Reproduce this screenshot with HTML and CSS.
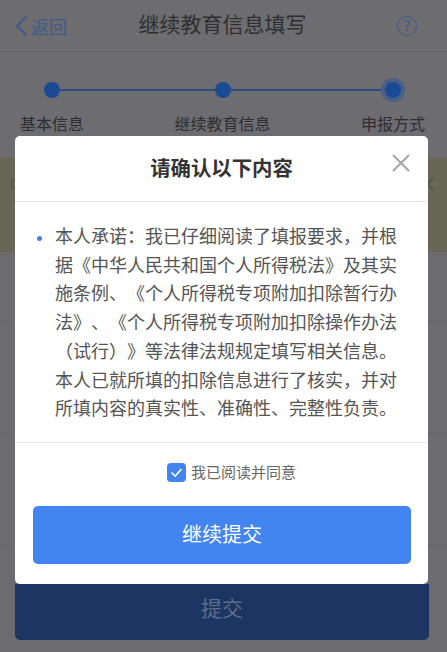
FILE: index.html
```html
<!DOCTYPE html>
<html lang="zh-CN">
  <head>
    <meta charset="UTF-8" />
    <meta name="viewport" content="width=device-width, initial-scale=1.0" />
    <title>继续教育信息填写</title>
    <link rel="stylesheet" href="styles.css">
  </head>
  <body>
    <div class="page">
      <div class="nav">
        <div class="nav-back">
          <svg class="nav-chevron" viewBox="0 0 13 22" width="13" height="22">
            <path d="M11.5 1.5 L2 11 L11.5 20.5" />
          </svg>
          <span>返回</span>
        </div>
        <div class="nav-title">继续教育信息填写</div>
        <div class="nav-help">?</div>
      </div>
      <div class="steps">
        <div class="step-track">
          <span class="step-dot"></span>
          <span class="step-line"></span>
          <span class="step-dot"></span>
          <span class="step-line"></span>
          <span class="step-dot step-dot-current"></span>
        </div>
        <div class="step-labels">
          <span>基本信息</span>
          <span>继续教育信息</span>
          <span>申报方式</span>
        </div>
      </div>
      <div class="notice">
        <span class="notice-icon"></span>
        <svg class="notice-close" viewBox="0 0 14 14" width="14" height="14">
          <path d="M1 1 L13 13 M13 1 L1 13" />
        </svg>
      </div>
      <div class="rows">
        <div class="row row-first"></div>
        <div class="row"></div>
        <div class="row"></div>
      </div>
      <div class="submit">提交</div>
    </div>

    <div class="modal">
      <div class="modal-head">
        <div class="modal-title">请确认以下内容</div>
        <svg class="modal-close" viewBox="0 0 20 20" width="20" height="20">
          <path d="M2 2 L18 18 M18 2 L2 18" />
        </svg>
      </div>
      <div class="modal-body">
        <span class="bullet"></span>
        <p class="promise">本人承诺&#xFF1A;我已仔细阅读了填报要求&#xFF0C;并根据《中华人民共和国个人所得税法》及其实施条例、《个人所得税专项附加扣除暂行办法》、《个人所得税专项附加扣除操作办法&#xFF08;试行&#xFF09;》等法律法规规定填写相关信息。本人已就所填的扣除信息进行了核实&#xFF0C;并对所填内容的真实性、准确性、完整性负责。</p>
      </div>
      <div class="modal-foot">
        <label class="agree">
          <svg class="agree-box" viewBox="0 0 19 19" width="19" height="19">
            <rect width="19" height="19" rx="4" />
            <path d="M4.5 9.5 L8.2 13 L14.5 6" />
          </svg>
          <span>我已阅读并同意</span>
        </label>
        <div class="continue">继续提交</div>
      </div>
    </div>
  </body>
</html>
```

FILE: styles.css
```css
* {
  box-sizing: border-box;
}

body {
  margin: 0;
  padding: 0;
  font-family: "Noto Sans CJK SC", "Liberation Sans", sans-serif;
}

.page {
  display: flex;
  flex-direction: column;
  width: 447px;
  height: 652px;
  overflow: hidden;
  background: #6c6b6f;
}

.nav {
  display: flex;
  justify-content: space-between;
  align-items: center;
  flex: none;
  height: 52px;
  padding: 0 30px 0 15px;
  background: #6d6c6e;
  border-bottom: 1px solid #676668;
  position: relative;
}

.nav-back {
  display: flex;
  align-items: center;
  gap: 3px;
  color: #3f5a8e;
  font-size: 18px;
}

.nav-chevron path {
  fill: none;
  stroke: #3f5a8e;
  stroke-width: 2;
}

.nav-title {
  position: absolute;
  left: 0;
  right: 0;
  top: 8px;
  padding-right: 2px;
  text-align: center;
  color: #2f2f31;
  font-size: 21px;
  line-height: 30px;
}

.nav-help {
  width: 20px;
  height: 20px;
  border: 1.5px solid #3f5a8e;
  border-radius: 50%;
  margin-top: 1px;
  color: #3f5a8e;
  font-size: 14px;
  line-height: 17px;
  text-align: center;
}

.steps {
  flex: none;
  height: 106px;
  padding-top: 28px;
  background: #6d6c70;
}

.step-track {
  display: flex;
  align-items: center;
  height: 20px;
  padding: 0 46px 0 44px;
}

.step-dot {
  flex: none;
  width: 16px;
  height: 16px;
  border-radius: 50%;
  background: #1b4a94;
}

.step-dot-current {
  box-shadow: 0 0 0 4px #4a5f87;
}

.step-line {
  flex: 1;
  height: 2px;
  background: #2c4c80;
}

.step-labels {
  display: flex;
  justify-content: space-between;
  padding: 0 22px 0 20px;
  margin-top: 12px;
  color: #2e2e30;
  font-size: 16px;
  line-height: 22px;
}

.notice {
  display: flex;
  justify-content: space-between;
  align-items: center;
  flex: none;
  height: 94px;
  padding: 0 13px 42px 10px;
  background: #676657;
}

.notice-icon {
  width: 18px;
  height: 18px;
  margin-left: 1px;
  border: 1.5px solid #4f4e45;
  border-radius: 50%;
}

.notice-close path {
  fill: none;
  stroke: #4f4e48;
  stroke-width: 1.5;
}

.rows {
  flex: 1;
}

.row {
  height: 112px;
  border-bottom: 1px solid #656468;
}

.row-first {
  height: 69px;
}

.submit {
  flex: none;
  height: 56px;
  margin: 0 18px 12px 15px;
  width: 414px;
  background: #1c3563;
  border-radius: 0 0 5px 5px;
  color: #5f6d88;
  font-size: 21px;
  line-height: 47px;
  text-align: center;
}

.modal {
  position: absolute;
  left: 15px;
  top: 136px;
  width: 413px;
  height: 448px;
  display: flex;
  flex-direction: column;
  background: #fff;
  border-radius: 5px;
}

.modal-head {
  position: relative;
  flex: none;
  height: 66px;
  border-bottom: 1px solid #e6e6e6;
  padding-top: 15px;
}

.modal-title {
  color: #333;
  font-size: 20.4px;
  font-weight: 700;
  line-height: 32px;
  text-align: center;
}

.modal-close {
  position: absolute;
  right: 17px;
  top: 17px;
}

.modal-close path {
  fill: none;
  stroke: #a6a6a6;
  stroke-width: 2;
}

.modal-body {
  display: flex;
  flex: none;
  height: 241px;
  padding: 19px 31px 0 22px;
  border-bottom: 1px solid #e6e6e6;
}

.bullet {
  flex: none;
  width: 5px;
  height: 5px;
  margin-top: 15px;
  margin-right: 13px;
  border-radius: 50%;
  background: #4a7fd6;
}

.promise {
  margin: 0;
  color: #555;
  font-size: 18px;
  line-height: 28.7px;
  text-spacing-trim: space-all;
}

.modal-foot {
  display: flex;
  flex-direction: column;
  align-items: center;
  flex: 1;
}

.agree {
  display: flex;
  align-items: center;
  gap: 5px;
  margin-top: 18px;
  margin-left: 20px;
  color: #666;
  font-size: 15px;
  line-height: 22px;
}

.agree-box rect {
  fill: #4285ef;
}

.agree-box path {
  fill: none;
  stroke: #fff;
  stroke-width: 1.6;
}

.continue {
  width: 378px;
  height: 58px;
  margin-top: 23px;
  margin-left: 1px;
  background: #4285f0;
  border-radius: 5px;
  color: #fff;
  font-size: 20px;
  line-height: 56px;
  text-align: center;
}
```
